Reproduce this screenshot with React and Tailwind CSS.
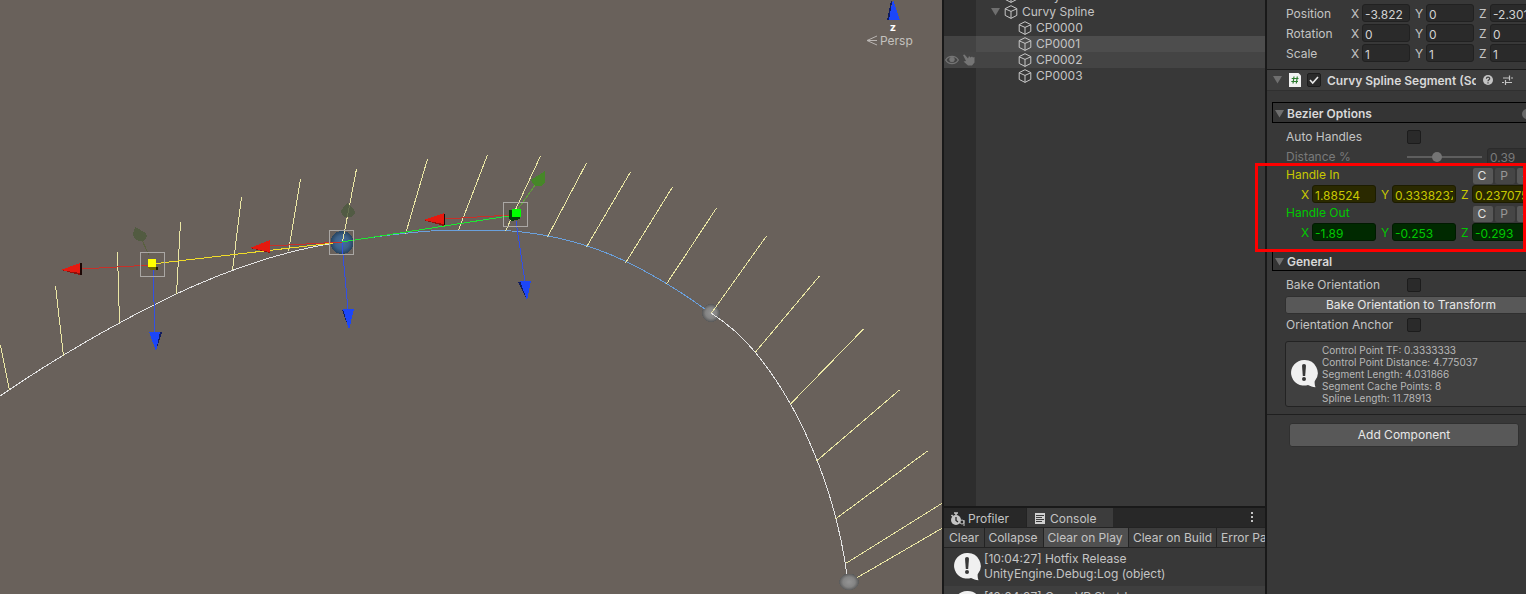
import { useState } from "react";

const scenePins = [
  [0, 345, 9, 390],
  [55, 286, 63, 356],
  [117, 252, 119, 323],
  [180, 222, 176, 294],
  [241, 197, 232, 270],
  [300, 179, 288, 251],
  [356, 169, 342, 242],
  [427, 159, 405, 234],
  [487, 155, 458, 230],
  [540, 156, 505, 231],
  [586, 163, 547, 237],
  [630, 172, 586, 247],
  [672, 187, 625, 263],
  [716, 208, 666, 284],
  [766, 236, 711, 313],
  [819, 276, 755, 352],
  [863, 329, 790, 404],
  [899, 390, 816, 461],
  [927, 451, 835, 519],
  [942, 503, 846, 563],
  [942, 528, 856, 578],
];

const Cube = () => (
  <svg viewBox="0 0 14 14" className="size-3.5 shrink-0" fill="none" stroke="#c8c8c8">
    <path d="M7 .7 12.8 3.6v6.8L7 13.4 1.2 10.4V3.6ZM1.2 3.8 7 6.4l5.8-2.6M7 6.4v7" />
  </svg>
);

const Arrow = () => (
  <svg viewBox="0 0 9 8" className="h-2 w-[9px] shrink-0" fill="#6f6f6f">
    <path d="M0 0h9L4.500 7.500Z" />
  </svg>
);

const InfoIcon = () => (
  <svg viewBox="0 0 28 30" className="h-[30px] w-7 shrink-0">
    <path
      fill="#f0f0f0"
      d="M14 1a13 12.800 0 1 0 4 25c2.500 1.300 4.500 2 7.500 2.300-.8-2.300-1-3.800-.8-6A13 13 0 0 0 14 1Z"
    />
    <path fill="#383838" d="M12 6.500a2 1.500 0 0 1 4 0L15.200 17h-2.400Z" />
    <circle cx="14" cy="20" r="2" fill="#383838" />
  </svg>
);

const Scene = () => (
  <svg
    viewBox="0 0 942 594"
    preserveAspectRatio="xMinYMin slice"
    className="h-full w-full"
    shapeRendering="crispEdges"
    fill="none"
  >
    <defs>
      <radialGradient id="ball">
        <stop offset="0" stopColor="#949494" />
        <stop offset=".6" stopColor="#848484" />
        <stop offset="1" stopColor="#585858" />
      </radialGradient>
      <radialGradient id="blueBall">
        <stop offset="0" stopColor="#47709c" />
        <stop offset=".6" stopColor="#3d628a" />
        <stop offset="1" stopColor="#284560" />
      </radialGradient>
    </defs>

    <path stroke="#e4e4e4" d="M0 396C60 355 118 322 176 294C232 268 290 249 342 242" />
    <circle cx="342" cy="242.500" r="11.500" fill="url(#blueBall)" />
    <circle cx="711" cy="313" r="9" fill="url(#ball)" />
    <path stroke="#6aa0dc" d="M342 242C385 235 415 231 450 230H495C580 233 640 263 705 309" />
    <path stroke="#e4e4e4" d="M711 313C728 324 742 336 755 352C795 400 834 480 847 575" />
    <g stroke="#ebe7a5" transform="translate(.5 0)">
      {scenePins.map(([x1, y1, x2, y2]) => (
        <line key={x2} x1={x1} y1={y1} x2={x2} y2={y2} />
      ))}
    </g>
    <ellipse cx="849" cy="582" rx="10" ry="8.500" fill="url(#ball)" />

    {/* handle lines */}
    <path stroke="#f0dc28" d="M152 264 342 242" />
    <path stroke="#1ee632" d="M342 242 515 215" />
    <path stroke="#c83028" d="M82 269 152 265M270 246 342 242M445 219 510 215" />
    <path stroke="#3250e6" d="M153 270 155 333M342 243 348 310M516 221 525 282" />
    <path stroke="#5fa038" d="M518 209 538 181" />
    <path stroke="#59603f" d="M141 238 149 255" />

    <g stroke="#aaa7a4">
      <rect x="140.500" y="252.500" width="24" height="24" />
      <rect x="329.500" y="230.500" width="24" height="24" />
      <rect x="503.500" y="202.500" width="24" height="24" />
    </g>

    {/* red cones */}
    <path fill="#1c0604" d="M80 263h2v12h-2ZM443 214h2v11h-2Z" />
    <path fill="#8f110b" d="M61 270 80 268V275ZM250 248 270 247V253ZM423 220 444 219V226Z" />
    <path fill="#e6190f" d="M61 270 80 263V273ZM250 248 270 240V252ZM423 220 444 213V224Z" />

    {/* blue cones */}
    <path fill="#101c60" d="M150 332h12l-6 19ZM342 310l7 19-3-19ZM518 282l9 18-3-18Z" />
    <path fill="#1c46f8" d="M149 332h11l-4 19ZM343 309h11l-5 21ZM520 281h11l-4 19ZM893 0 900 20H888Z" />
    <path fill="#101c60" d="M891 1 887 20h2l3-18Z" />

    {/* green cones */}
    <path fill="#525b41" d="M135 227 146 233C149 238 144 242 139 241 134 240 131 236 135 227Z" />
    <path fill="#4f5b41" fillOpacity=".85" d="M348 203C352 207 355 210 355 213 353 219 342 219 341 212 341 209 345 206 348 203Z" />
    <path fill="#468728" d="M545 171V183C541 189 533 187 531 180Z" />

    <path fill="#1c1a04" d="M150 267h8v3h-8Z" />
    <path fill="#6f6a05" d="M148 267h8v3h-6Z" />
    <rect x="148" y="259" width="8" height="8" fill="#ff0" />
    <path fill="#05400a" d="M509 210h5v7h6v2l-8 2-3-2Z" />
    <rect x="512" y="209" width="9" height="8" fill="#0f0" />

    <g shapeRendering="auto" className="font-[Inter]">
      <text x="893" y="31" textAnchor="middle" fill="#fff" className="text-[11px] font-bold">z</text>
      <path stroke="#b9b5b2" d="M877 36 867 40.500 877 45M867 40.500H877" />
      <text x="880" y="45" fill="#c4c1be" className="text-xs">Persp</text>
    </g>
  </svg>
);

const HierarchyRow = ({ name, depth, open, rowClass = "", visibility }) => (
  <li className={`flex h-4 items-center ${rowClass}`}>
    <span className="flex w-8 shrink-0 items-center gap-1 pl-px">
      {visibility && (
        <>
          <svg viewBox="0 0 14 10" className="h-2.5 w-3.5 shrink-0" fill="none" stroke="#757575">
            <path strokeWidth="1.300" d="M.7 5C3.500.2 10.500.2 13.300 5 10.500 9.800 3.500 9.800.7 5Z" />
            <circle cx="7" cy="4.500" r="2.300" fill="#757575" />
          </svg>
          <svg viewBox="0 0 12 12" className="size-3 shrink-0" fill="#757575">
            <path d="M0 1 1.500.5 5 4.500 6 2 7.500 3.500 9 2.500 10 3.500 11.500 3V8.500L9 11.500H5L.5 7.500 3 7Z" />
          </svg>
        </>
      )}
    </span>
    <span className={depth === 2 ? "flex items-center gap-1 pl-[42px]" : "flex items-center gap-1 pl-[15px]"}>
      {depth === 1 && (open ? <Arrow /> : <span className="w-[9px]" />)}
      <Cube />
      {name}
    </span>
  </li>
);

const Hierarchy = () => (
  <div className="min-h-0 flex-1 overflow-hidden bg-[linear-gradient(to_right,#2d2d2d_32px,#383838_32px)]">
    <ul className="-mt-3">
      <HierarchyRow name="Enemy Base 2" depth={1} />
      <HierarchyRow name="Curvy Spline" depth={1} open />
      <HierarchyRow name="CP0000" depth={2} />
      <HierarchyRow name="CP0001" depth={2} rowClass="bg-[linear-gradient(to_right,#434343_32px,#4d4d4d_32px)]" />
      <HierarchyRow name="CP0002" depth={2} rowClass="bg-[#444]" visibility />
      <HierarchyRow name="CP0003" depth={2} />
    </ul>
  </div>
);

const logs = [
  { text: "[10:04:27] Hotfix Release", source: "UnityEngine.Debug:Log (object)" },
  { text: "[10:04:27] OpenVR Shutdown", source: "UnityEngine.Debug:Log (object)" },
];

const Console = () => (
  <div className="h-[88px] shrink-0 overflow-hidden border-t-2 border-[#191919]">
    <div className="flex h-[19px] items-stretch bg-[#282828]">
      <button className="flex w-[83px] items-center gap-0.5 border-r border-[#232323] pt-0.5 pl-1.5">
        <svg viewBox="0 0 16 14" className="h-3.5 w-4 shrink-0" fill="none" stroke="#c4c4c4">
          <circle cx="6" cy="8" r="5" fill="#c4c4c4" stroke="none" />
          <path strokeWidth="1.600" d="M4 1h4M6 1v2M1.500 3 3 4.500" />
          <path stroke="#282828" strokeWidth="1.300" d="M6 5v3.500l2 1.500" />
          <circle cx="12" cy="10" r="2" fill="#282828" />
          <path d="M14 8v6" />
        </svg>
        Profiler
      </button>
      <button className="flex w-[86px] items-center gap-[5px] bg-[#3c3c3c] pt-0.5 pl-2">
        <svg viewBox="0 0 10 11" className="h-[11px] w-2.5 shrink-0">
          <path fill="#d0d0d0" d="M0 0h10v11H0Z" />
          <path stroke="#3c3c3c" d="M1 2.500h8M1 4.500h6M1 6.500h8M1 8.500h6" />
        </svg>
        Console
      </button>
      <button aria-label="Menu" className="ml-auto pr-[11px]">
        <svg viewBox="0 0 3 11" className="h-[11px] w-[3px]" fill="#c4c4c4">
          <path d="M0 0h2v2H0ZM0 4h2v2H0ZM0 8h2v2H0Z" />
        </svg>
      </button>
    </div>
    <div className="flex h-[21px] items-stretch border-y border-[#232323] bg-[#3c3c3c] whitespace-nowrap">
      <button className="w-[41px] shrink-0 border-r border-[#232323]">Clear</button>
      <button className="w-[59px] shrink-0 border-r border-[#232323] pr-0.5">Collapse</button>
      <button className="w-[85px] shrink-0 border-r border-[#232323] bg-[#505050] pr-0.5">Clear on Play</button>
      <button className="w-[88px] shrink-0 border-r border-[#232323]">Clear on Build</button>
      <button className="shrink-0 pl-1">Error Pause</button>
    </div>
    {logs.map((log) => (
      <div key={log.text} className="flex h-[38px] items-center gap-[3px] pl-[9px] leading-[15px] odd:bg-[#383838] even:bg-[#3f3f3f]">
        <InfoIcon />
        <p className="pb-0.5">
          {log.text}
          <br />
          {log.source}
        </p>
      </div>
    ))}
  </div>
);

const Check = ({ id }) => (
  <input
    id={id}
    type="checkbox"
    className="size-3.5 shrink-0 appearance-none rounded-xs border border-[#1c1c1c] bg-[#2a2a2a]"
  />
);

const inputTones = {
  plain: "border-[#212121] bg-[#2a2a2a] text-[#d2d2d2]",
  yellow: "border-[#1c1c00] bg-[#2a2900] text-[#c8c800]",
  green: "border-[#001a00] bg-[#002900] text-[#00c800]",
};

const NumField = ({ axis, label, value, width, tone = "plain" }) => {
  const [val, setVal] = useState(value);
  return (
    <label className="flex shrink-0 items-center">
      <span className="w-[11px] pt-0.5">{axis}</span>
      <input
        aria-label={`${label} ${axis}`}
        value={val}
        onChange={(e) => setVal(e.target.value)}
        className={`h-[18px] rounded-[3px] border px-0.5 pt-0.5 ${width} ${inputTones[tone]}`}
      />
    </label>
  );
};

const TransformRow = ({ label, values }) => (
  <div className="flex h-[18px] items-center pl-[19px]">
    <span className="w-[65px] shrink-0 pt-0.5">{label}</span>
    <div className="flex gap-[5px]">
      {["X", "Y", "Z"].map((axis, i) => (
        <NumField key={axis} axis={axis} label={label} value={values[i]} width="w-12" />
      ))}
    </div>
  </div>
);

const HandleRow = ({ label, values, tone }) => (
  <div className={tone === "yellow" ? "text-[#c8c800]" : "text-[#00c800]"}>
    <div className="flex h-5 items-center pl-[19px]">
      <span className="w-[187px] shrink-0 leading-4">{label}</span>
      <div className="flex gap-0.5 pt-0.5 leading-4">
        <button className="h-4 w-5 shrink-0 rounded-xs bg-[#585858] pr-0.5 text-[#e4e4e4]">C</button>
        <button className="h-4 w-5 shrink-0 rounded-xs bg-[#464646] pr-0.5 text-[#989898]">P</button>
        <button className="h-4 w-5 shrink-0 rounded-xs bg-[#585858] pr-0.5 text-[#e4e4e4]">+</button>
      </div>
    </div>
    <div className="flex h-[18px] gap-[5px] pl-[34px]">
      {["X", "Y", "Z"].map((axis, i) => (
        <NumField key={axis} axis={axis} label={label} value={values[i]} width="w-16" tone={tone} />
      ))}
    </div>
  </div>
);

const SectionTitle = ({ children, help }) => (
  <div className="ml-[5px] flex h-[21px] items-center gap-[3px] border border-r-0 border-black bg-[#343434] pt-0.5 pl-0.5 font-semibold text-[#d8d8d8]">
    <Arrow />
    <h2>{children}</h2>
    {help && <span className="-mr-1.5 ml-auto size-2.5 rounded-full bg-[#686868]" />}
  </div>
);

const stats = [
  "Control Point TF: 0.3333333",
  "Control Point Distance: 4.775037",
  "Segment Length: 4.031866",
  "Segment Cache Points: 8",
  "Spline Length: 11.78913",
];

const Inspector = () => (
  <aside className="w-[261px] shrink-0 border-l-2 border-[#191919] bg-[#383838]">
    <div className="flex flex-col gap-0.5 overflow-hidden pt-1 pb-[7px]">
      <TransformRow label="Position" values={["-3.822", "0", "-2.301"]} />
      <TransformRow label="Rotation" values={["0", "0", "0"]} />
      <TransformRow label="Scale" values={["1", "1", "1"]} />
    </div>

    <div className="flex h-[22px] items-center border-y border-t-[#1a1a1a] border-b-[#303030] bg-[#3e3e3e] pl-1.5">
      <Arrow />
      <svg viewBox="0 0 12 14" className="ml-[7px] h-3.5 w-3 shrink-0">
        <path fill="#f2f2f2" d="M0 0h9.500L12 2.500V14H0Z" />
        <path stroke="#2f7d32" strokeWidth="1.200" d="M5 3.500 4 10.500M8.300 3.500 7.300 10.500M2.700 5.500H9.500M2.300 8.500H9" />
      </svg>
      <label className="relative ml-1.5 flex shrink-0">
        <input
          type="checkbox"
          aria-label="Enable Curvy Spline Segment"
          defaultChecked
          className="peer size-3.5 appearance-none rounded-xs border border-[#1c1c1c] bg-[#2a2a2a]"
        />
        <svg viewBox="0 0 14 14" className="absolute inset-0 hidden size-3.5 peer-checked:block" fill="none" stroke="#e8e8e8" strokeWidth="1.600">
          <path d="m3 7 2.700 3L11 4" />
        </svg>
      </label>
      <h2 className="ml-1.5 w-[149px] shrink-0 overflow-hidden pt-0.5 font-semibold whitespace-nowrap text-[#d8d8d8]">
        Curvy Spline Segment (Script)
      </h2>
      <button aria-label="Help" className="ml-[7px]">
        <svg viewBox="0 0 10 10" className="size-2.5">
          <circle cx="5" cy="5" r="5" fill="#c4c4c4" />
          <path fill="none" stroke="#3e3e3e" strokeWidth="1.200" d="M3.400 3.800C3.400 1.700 6.700 1.700 6.700 3.700 6.700 4.700 5 4.900 5 6.200M5 7.200v1.200" />
        </svg>
      </button>
      <button aria-label="Presets" className="ml-[9px]">
        <svg viewBox="0 0 11 10" className="h-2.5 w-[11px]" stroke="#c4c4c4" strokeWidth="1.200">
          <path d="M1 3h6M9 3h2M7.500.500v5M0 7.500h2M4 7.500h6M3.500 5v5" />
        </svg>
      </button>
    </div>

    <div className="overflow-hidden pt-[11px]">
      <SectionTitle help>Bezier Options</SectionTitle>
      <div className="flex h-[26px] items-center pt-0.5 pl-[19px]">
        <label htmlFor="auto" className="w-[121px]">Auto Handles</label>
        <Check id="auto" />
      </div>
      <div className="flex h-4 items-center pl-[19px] text-[#7a7a7a]">
        <label htmlFor="distance" className="w-[121px] shrink-0">Distance %</label>
        <input
          id="distance"
          type="range"
          defaultValue="39"
          disabled
          className="h-2.5 w-[75px] shrink-0 appearance-none bg-[linear-gradient(#5e5e5e,#5e5e5e)] bg-[length:100%_2px] bg-center bg-no-repeat [&::-webkit-slider-thumb]:size-2.5 [&::-webkit-slider-thumb]:appearance-none [&::-webkit-slider-thumb]:rounded-full [&::-webkit-slider-thumb]:bg-[#747474]"
        />
        <input
          aria-label="Distance value"
          defaultValue="0.39"
          disabled
          className="ml-[5px] h-[18px] w-12 shrink-0 rounded-[3px] border border-[#2b2b2b] bg-[#313131] px-0.5"
        />
      </div>
    </div>

    <div className="relative pb-[9px]">
      <div className="overflow-hidden">
        <HandleRow label="Handle In" values={["1.88524", "0.3338237", "0.237075"]} tone="yellow" />
        <HandleRow label="Handle Out" values={["-1.89", "-0.253", "-0.293"]} tone="green" />
      </div>
      <div className="pointer-events-none absolute -inset-y-0.5 right-0 -left-3 border-[3px] border-[#fe0000]" />
    </div>

    <div className="overflow-hidden">
      <SectionTitle>General</SectionTitle>
      <div className="flex flex-col pl-[18px]">
        <div className="flex h-[25px] items-center pt-0.5 pl-px">
          <label htmlFor="bake" className="w-[121px]">Bake Orientation</label>
          <Check id="bake" />
        </div>
        <button className="h-[18px] w-[252px] rounded-[3px] border border-[#303030] bg-[#585858] leading-4 text-[#e8e8e8]">
          Bake Orientation to Transform
        </button>
        <div className="flex h-[22px] items-center pl-px">
          <label htmlFor="anchor" className="w-[121px]">Orientation Anchor</label>
          <Check id="anchor" />
        </div>
        <div className="mt-[5px] flex h-[66px] w-[252px] items-center gap-1 rounded-[3px] border border-[#232323] bg-[#404040] pl-1 text-[10px] leading-3 text-[#b8b8b8]">
          <InfoIcon />
          <ul>
            {stats.map((s) => (
              <li key={s}>{s}</li>
            ))}
          </ul>
        </div>
      </div>
    </div>

    <div className="mt-[7px] border-t border-[#1f1f1f] pt-2 pr-[7px] pl-[22px]">
      <button className="h-6 w-full rounded-[3px] border border-[#303030] bg-[#585858] text-[#e8e8e8]">
        Add Component
      </button>
    </div>
  </aside>
);

const App = () => {
  return (
    <div className="flex h-screen w-full overflow-hidden bg-[#383838] font-[Inter,sans-serif] text-xs text-[#c4c4c4]">
      <main className="min-w-0 flex-1 bg-[#69615b]">
        <Scene />
      </main>
      <section className="flex w-[323px] shrink-0 flex-col border-l-2 border-[#191919]">
        <Hierarchy />
        <Console />
      </section>
      <Inspector />
    </div>
  );
};

export default App;
